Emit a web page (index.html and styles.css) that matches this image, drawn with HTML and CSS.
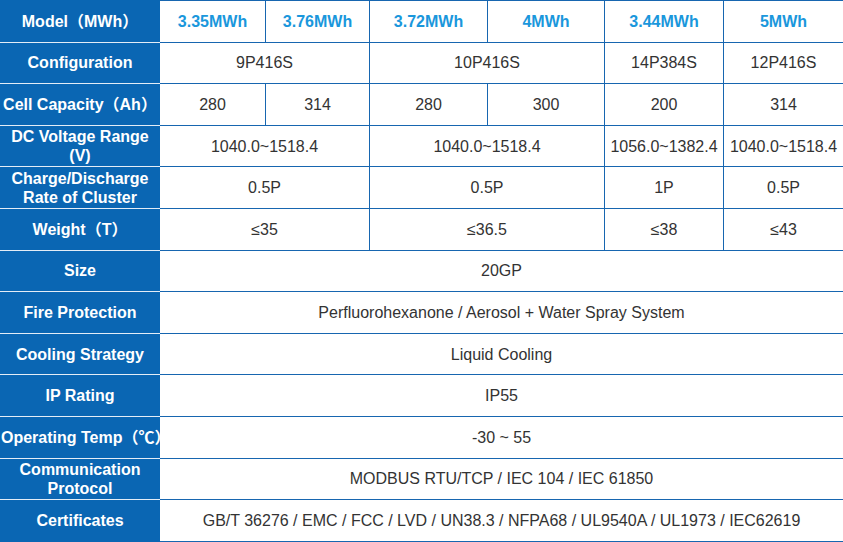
FILE: index.html
```html
<!DOCTYPE html>
<html>
<head>
<meta charset="utf-8">
<link rel="stylesheet" href="styles.css">
</head>
<body>
<table class="spec">
  <colgroup>
    <col class="c-label">
    <col class="c1"><col class="c2"><col class="c3"><col class="c4"><col class="c5"><col class="c6">
  </colgroup>
  <tbody>
    <tr>
      <th>Model（MWh）</th>
      <td class="model">3.35MWh</td>
      <td class="model">3.76MWh</td>
      <td class="model">3.72MWh</td>
      <td class="model">4MWh</td>
      <td class="model">3.44MWh</td>
      <td class="model">5MWh</td>
    </tr>
    <tr>
      <th>Configuration</th>
      <td colspan="2">9P416S</td>
      <td colspan="2">10P416S</td>
      <td>14P384S</td>
      <td>12P416S</td>
    </tr>
    <tr>
      <th>Cell Capacity（Ah）</th>
      <td>280</td><td>314</td><td>280</td><td>300</td><td>200</td><td>314</td>
    </tr>
    <tr>
      <th>DC Voltage Range<br>(V)</th>
      <td colspan="2">1040.0~1518.4</td>
      <td colspan="2">1040.0~1518.4</td>
      <td>1056.0~1382.4</td>
      <td>1040.0~1518.4</td>
    </tr>
    <tr>
      <th>Charge/Discharge<br>Rate of Cluster</th>
      <td colspan="2">0.5P</td>
      <td colspan="2">0.5P</td>
      <td>1P</td>
      <td>0.5P</td>
    </tr>
    <tr>
      <th>Weight（T）</th>
      <td colspan="2">≤35</td>
      <td colspan="2">≤36.5</td>
      <td>≤38</td>
      <td>≤43</td>
    </tr>
    <tr><th>Size</th><td colspan="6">20GP</td></tr>
    <tr><th>Fire Protection</th><td colspan="6">Perfluorohexanone / Aerosol + Water Spray System</td></tr>
    <tr><th>Cooling Strategy</th><td colspan="6">Liquid Cooling</td></tr>
    <tr><th>IP Rating</th><td colspan="6">IP55</td></tr>
    <tr><th class="nowrap">Operating Temp（℃）</th><td colspan="6">-30 ~ 55</td></tr>
    <tr><th>Communication<br>Protocol</th><td colspan="6">MODBUS RTU/TCP / IEC 104 / IEC 61850</td></tr>
    <tr><th>Certificates</th><td colspan="6">GB/T 36276 / EMC / FCC / LVD / UN38.3 / NFPA68 / UL9540A / UL1973 / IEC62619</td></tr>
  </tbody>
</table>
</body>
</html>
```

FILE: styles.css
```css
html, body {
  margin: 0;
  padding: 0;
  background: #ffffff;
}

.spec {
  width: 843px;
  table-layout: fixed;
  border-collapse: collapse;
  font-family: "Liberation Sans", Arial, "Noto Sans CJK SC", sans-serif;
}

.c-label { width: 159px; }
.c1 { width: 106px; }
.c2 { width: 104px; }
.c3 { width: 118px; }
.c4 { width: 117px; }
.c5 { width: 119px; }
.c6 { width: 120px; }

.spec tr {
  height: 41.6px;
}

.spec th {
  background: #0a66b3;
  color: #ffffff;
  font-weight: bold;
  font-size: 16px;
  line-height: 19px;
  text-align: center;
  padding: 0;
  border-top: 1px solid #e4edf7;
  border-bottom: 1px solid #e4edf7;
  border-left: 1px solid #0a66b3;
  border-right: 1px solid #0a66b3;
}

.spec tr:first-child th { border-top-color: #0a66b3; }
.spec tr:last-child th { border-bottom-color: #0a66b3; }

.spec th.nowrap {
  white-space: nowrap;
  overflow: visible;
}

.spec td {
  color: #333333;
  font-size: 16px;
  line-height: 19px;
  text-align: center;
  padding: 0;
  border: 1px solid #1766b0;
  background: #ffffff;
}

.spec td.model {
  color: #1a97dc;
  font-weight: bold;
  font-size: 16px;
}
```
